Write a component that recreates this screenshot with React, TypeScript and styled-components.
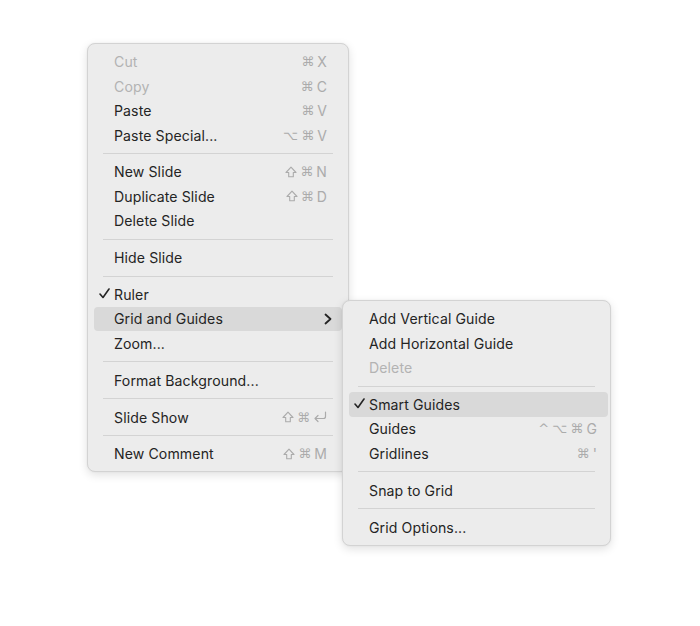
import styled, { createGlobalStyle } from 'styled-components';

const GlobalStyle = createGlobalStyle`
  html, body {
    margin: 0;
    padding: 0;
    background: #ffffff;
  }
  body {
    font-family: Inter, "Liberation Sans", sans-serif;
    -webkit-font-smoothing: antialiased;
  }
`;

const Page = styled.div`
  width: 700px;
  height: 626px;
  padding: 43px 0 0 87px;
  box-sizing: border-box;
`;

const Menu = styled.div<{ $width: number }>`
  position: relative;
  width: ${({ $width }) => $width}px;
  box-sizing: border-box;
  padding: 5.7px 0 5.3px;
  background: #ececec;
  border: 1px solid #d3d3d3;
  border-radius: 8px;
  box-shadow: 0 3px 10px rgba(0, 0, 0, 0.12), 0 0 2px rgba(0, 0, 0, 0.06);
`;

const SubMenu = styled(Menu)`
  position: absolute;
  left: 254px;
  top: 256px;
  z-index: 2;
`;

const Row = styled.div<{ $active?: boolean; $disabled?: boolean; $right: number; $edge: number }>`
  position: relative;
  display: flex;
  align-items: center;
  height: 24.4px;
  margin: 0 ${({ $edge }) => $edge}px 0 6px;
  padding: 0 ${({ $right }) => $right}px 0 20px;
  border-radius: 4px;
  background: ${({ $active }) => ($active ? '#d9d9d9' : 'transparent')};
  color: ${({ $disabled }) => ($disabled ? '#b3b3b3' : '#242424')};
  font-size: 14.1px;
  letter-spacing: 0.1px;
`;

const Check = styled.span`
  position: absolute;
  left: 5px;
  top: 6px;
  display: flex;
`;

const Label = styled.span`
  flex: 1;
  white-space: nowrap;
`;

const Keys = styled.span`
  display: flex;
  gap: 3px;
  align-items: center;
  color: #ababab;
  font-size: 14px;
`;

const Glyph = styled.span`
  font-family: "DejaVu Sans", sans-serif;
  font-size: 13px;
`;

const Arrow = styled.span`
  display: flex;
  align-items: center;
  margin-right: -6px;
`;

const Separator = styled.div`
  height: 1px;
  margin: 5.75px 15px;
  background: #d3d3d3;
`;

type Item =
  | { sep: true }
  | {
      sep?: false;
      label: string;
      keys?: string[];
      last?: string;
      shift?: boolean;
      checked?: boolean;
      disabled?: boolean;
      active?: boolean;
      submenu?: boolean;
      ret?: boolean;
    };

const mainItems: Item[] = [
  { label: 'Cut', keys: ['⌘'], last: 'X', disabled: true },
  { label: 'Copy', keys: ['⌘'], last: 'C', disabled: true },
  { label: 'Paste', keys: ['⌘'], last: 'V' },
  { label: 'Paste Special...', keys: ['⌥', '⌘'], last: 'V' },
  { sep: true },
  { label: 'New Slide', shift: true, keys: ['⌘'], last: 'N' },
  { label: 'Duplicate Slide', shift: true, keys: ['⌘'], last: 'D' },
  { label: 'Delete Slide' },
  { sep: true },
  { label: 'Hide Slide' },
  { sep: true },
  { label: 'Ruler', checked: true },
  { label: 'Grid and Guides', active: true, submenu: true },
  { label: 'Zoom...' },
  { sep: true },
  { label: 'Format Background...' },
  { sep: true },
  { label: 'Slide Show', shift: true, keys: ['⌘'], ret: true },
  { sep: true },
  { label: 'New Comment', shift: true, keys: ['⌘'], last: 'M' },
];

const subItems: Item[] = [
  { label: 'Add Vertical Guide' },
  { label: 'Add Horizontal Guide' },
  { label: 'Delete', disabled: true },
  { sep: true },
  { label: 'Smart Guides', checked: true, active: true },
  { label: 'Guides', keys: ['^', '⌥', '⌘'], last: 'G' },
  { label: 'Gridlines', keys: ['⌘'], last: "'" },
  { sep: true },
  { label: 'Snap to Grid' },
  { sep: true },
  { label: 'Grid Options...' },
];

const ChevronRight = () => (
  <svg width="10" height="12" viewBox="0 0 10 12" fill="none">
    <path d="M2.5 1.5 L7.5 6 L2.5 10.5" stroke="#242424" strokeWidth="1.8" strokeLinecap="round" strokeLinejoin="round" />
  </svg>
);

const CheckMark = () => (
  <svg width="11" height="11" viewBox="0 0 11 11" fill="none">
    <path d="M1 6 L4 9.5 L10 1" stroke="#242424" strokeWidth="1.6" strokeLinecap="round" strokeLinejoin="round" />
  </svg>
);

const ShiftKey = () => (
  <svg width="12" height="12" viewBox="0 0 12 12" fill="none">
    <path d="M6 1.2 L11 6.5 H8.3 V10.8 H3.7 V6.5 H1 Z" stroke="#ababab" strokeWidth="1.1" strokeLinejoin="round" />
  </svg>
);

const ReturnKey = () => (
  <svg width="14" height="12" viewBox="0 0 14 12" fill="none">
    <path d="M12.5 1 V5.5 Q12.5 7.5 10.5 7.5 H2 M5 4.5 L2 7.5 L5 10.5" stroke="#ababab" strokeWidth="1.2" strokeLinecap="round" strokeLinejoin="round" />
  </svg>
);

const renderItems = (items: Item[], right: number, edge: number) =>
  items.map((item, i) => {
    if (item.sep) return <Separator key={i} />;
    return (
      <Row key={i} $active={item.active} $disabled={item.disabled} $right={right} $edge={edge}>
        {item.checked && (
          <Check>
            <CheckMark />
          </Check>
        )}
        <Label>{item.label}</Label>
        {item.keys && (
          <Keys>
            {item.shift && <ShiftKey />}
            {item.keys.map((k, j) => (
              <Glyph key={j}>{k}</Glyph>
            ))}
            {item.last && <span>{item.last}</span>}
            {item.ret && <ReturnKey />}
          </Keys>
        )}
        {item.submenu && (
          <Arrow>
            <ChevronRight />
          </Arrow>
        )}
      </Row>
    );
  });

export default function App() {
  return (
    <>
      <GlobalStyle />
      <Page>
        <Menu $width={262}>
          {renderItems(mainItems, 15, 6)}
          <SubMenu $width={269}>{renderItems(subItems, 11, 2)}</SubMenu>
        </Menu>
      </Page>
    </>
  );
}
